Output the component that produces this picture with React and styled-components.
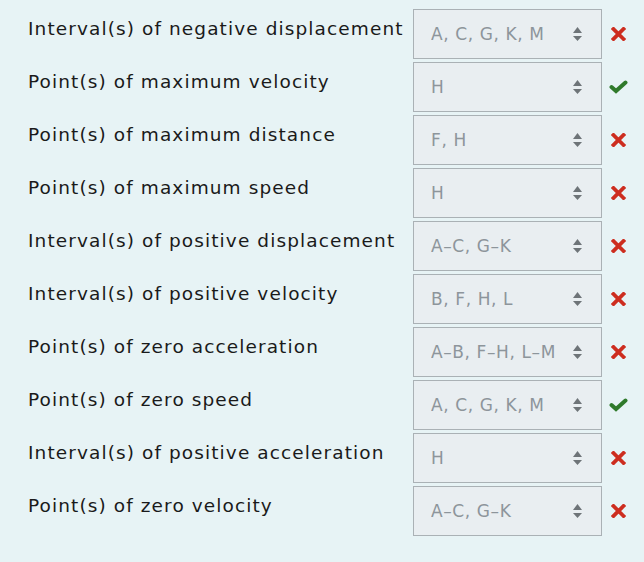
import React from 'react'
import styled, { createGlobalStyle } from 'styled-components'

const Global = createGlobalStyle`
  html, body {
    margin: 0;
    background: #e7f3f5;
  }
  body {
    font-family: "DejaVu Sans", "Noto Sans", sans-serif;
  }
`

const Page = styled.div`
  min-height: 562px;
  box-sizing: border-box;
  padding: 9px 0 0 28px;
  background: #e7f3f5;
`

const Row = styled.div`
  display: grid;
  grid-template-columns: 385px 189px 30px;
  align-items: start;
  margin-bottom: 3px;
`

const Label = styled.div`
  padding-top: 8px;
  font-size: 18.5px;
  line-height: 24px;
  letter-spacing: 1.1px;
  color: #1a1a1a;
  white-space: nowrap;
`

const SelectWrap = styled.div`
  position: relative;
  height: 50px;
`

const Select = styled.select`
  appearance: none;
  width: 100%;
  height: 100%;
  box-sizing: border-box;
  padding: 0 30px 0 17px;
  border: 1px solid #aab1b5;
  border-radius: 0;
  background: #e9eef1;
  color: #8d959b;
  font-family: "DejaVu Sans", "Noto Sans", sans-serif;
  font-size: 17px;
  letter-spacing: 0.6px;
  outline: none;
`

const Arrows = styled.svg`
  position: absolute;
  right: 20px;
  top: 50%;
  transform: translateY(-50%);
  pointer-events: none;
`

const Mark = styled.div`
  height: 50px;
  display: flex;
  align-items: center;
  justify-content: center;
  padding-left: 2px;
`

const Cross = () => (
  <svg width="15" height="14" viewBox="0 0 15 14">
    <path d="M2.5 2 L12.5 12 M12.5 2 L2.5 12" stroke="#cd2d1f" strokeWidth="3.8" strokeLinecap="square" />
  </svg>
)

const Check = () => (
  <svg width="19" height="14" viewBox="0 0 19 14">
    <path d="M2.5 7 L7 11 L16.5 2.5" stroke="#2f7a2b" strokeWidth="4" fill="none" strokeLinecap="round" strokeLinejoin="miter" />
  </svg>
)

const rows = [
  ['Interval(s) of negative displacement', 'A, C, G, K, M', false],
  ['Point(s) of maximum velocity', 'H', true],
  ['Point(s) of maximum distance', 'F, H', false],
  ['Point(s) of maximum speed', 'H', false],
  ['Interval(s) of positive displacement', 'A–C, G–K', false],
  ['Interval(s) of positive velocity', 'B, F, H, L', false],
  ['Point(s) of zero acceleration', 'A–B, F–H, L–M', false],
  ['Point(s) of zero speed', 'A, C, G, K, M', true],
  ['Interval(s) of positive acceleration', 'H', false],
  ['Point(s) of zero velocity', 'A–C, G–K', false],
]

export default function App() {
  return (
    <>
      <Global />
      <Page>
        {rows.map(([label, value, ok]) => (
          <Row key={label}>
            <Label>{label}</Label>
            <SelectWrap>
              <Select value={value} onChange={() => {}}>
                <option>{value}</option>
              </Select>
              <Arrows width="9" height="14" viewBox="0 0 9 14">
                <path d="M4.5 0 L9 6 H0 Z" fill="#6e7478" />
                <path d="M0 9 H9 L4.5 14 Z" fill="#6e7478" />
              </Arrows>
            </SelectWrap>
            <Mark>{ok ? <Check /> : <Cross />}</Mark>
          </Row>
        ))}
      </Page>
    </>
  )
}
